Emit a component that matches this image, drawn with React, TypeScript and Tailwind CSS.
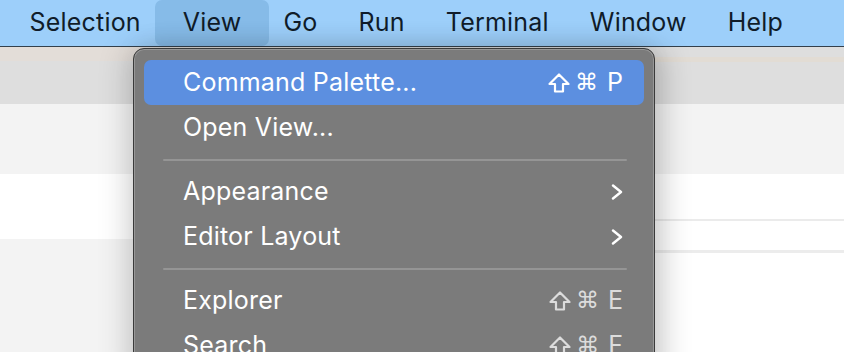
import React from "react";

const Chevron = () => (
  <svg width="12" height="16" viewBox="0 0 12 16" className="block">
    <polyline points="2,1.5 10,8 2,14.5" fill="none" stroke="white" strokeWidth="2.4" strokeLinecap="round" strokeLinejoin="round" />
  </svg>
);

const ShiftIcon = ({ color }: { color: string }) => (
  <svg width="22" height="20" viewBox="0 0 22 20" className="block">
    <path d="M11 1.5 L20.5 11 H15 V18.5 H7 V11 H1.5 Z" fill="none" stroke={color} strokeWidth="2.2" strokeLinejoin="round" />
  </svg>
);

const Shortcut = ({ k, dim }: { k: string; dim?: boolean }) => (
  <div className={`flex items-center ${dim ? "text-[#dcdcdc]" : "text-white"}`}>
    <ShiftIcon color={dim ? "#dcdcdc" : "#ffffff"} />
    <span className="ml-[5px] text-[23px] leading-none" style={{ fontFamily: '"DejaVu Sans", sans-serif' }}>⌘</span>
    <span className="ml-[9px] text-[25px] leading-none">{k}</span>
  </div>
);

const Row = ({ label, right, active }: { label: string; right?: React.ReactNode; active?: boolean }) => (
  <div className={`h-[45px] flex items-center justify-between pl-[39px] pr-[21px] rounded-[7px] ${active ? "bg-[#5c8fe0]" : ""}`}>
    <span className="text-[25px] tracking-[0.2px] text-white leading-none -mt-[1px]">{label}</span>
    {right}
  </div>
);

const Sep = () => (
  <div className="h-[19px] flex items-center pl-[19px] pr-[17px]">
    <div className="h-[2px] w-full bg-[#959595] rounded-full" />
  </div>
);

export default function App() {
  const items = ["Selection", "View", "Go", "Run", "Terminal", "Window", "Help"];
  return (
    <div className="w-[844px] h-[352px] relative overflow-hidden bg-white" style={{ fontFamily: 'Inter, "Liberation Sans", sans-serif' }}>
      <div className="h-[47px] bg-[#9dcffa] flex items-center pl-[9px] border-b border-[#33404c]">
        {items.map((it) =>
          it === "View" ? (
            <div key={it} className="h-[46px] -mx-[6px] px-[27.5px] flex items-center rounded-[7px] bg-[#86bbe8] text-[25px] tracking-[0.2px] text-[#101c29]">
              {it}
            </div>
          ) : (
            <div key={it} className="h-[46px] px-[20.5px] flex items-center text-[25px] tracking-[0.2px] text-[#101c29]">
              {it}
            </div>
          )
        )}
      </div>
      <div className="flex h-[305px]">
        <div className="w-[400px] flex flex-col">
          <div className="h-[57px] bg-[#dedede] flex flex-col">
            <div className="h-[14px] bg-[#e3ddd8]" />
          </div>
          <div className="h-[70px] bg-[#f3f3f3]" />
          <div className="h-[65px] bg-white" />
          <div className="flex-1 bg-[#f3f3f3]" />
        </div>
        <div className="flex-1 flex flex-col">
          <div className="h-[57px] bg-[#dedede] flex flex-col pl-[288px] pt-[10px]">
            <div className="h-[5px] w-[200px] bg-[#e2dcd4]" />
          </div>
          <div className="h-[70px] bg-[#f3f3f3]" />
          <div className="h-[45px] bg-white" />
          <div className="h-[2px] bg-[#ebebeb]" />
          <div className="h-[29px] bg-white" />
          <div className="h-[3px] bg-[#ececec]" />
          <div className="flex-1 bg-white" />
        </div>
      </div>
      <div className="absolute left-[133px] top-[48px] w-[522px] h-[330px] rounded-t-[11px] bg-[#7b7b7b] border border-[#3a3a3a] shadow-[inset_0_0_0_1px_rgba(255,255,255,0.22),10px_0_28px_rgba(0,0,0,0.18),-10px_0_28px_rgba(0,0,0,0.12)] pt-[11px] px-[10px]">
        <Row label="Command Palette..." active right={<Shortcut k="P" />} />
        <Row label="Open View..." />
        <Sep />
        <Row label="Appearance" right={<Chevron />} />
        <Row label="Editor Layout" right={<Chevron />} />
        <Sep />
        <Row label="Explorer" right={<Shortcut k="E" dim />} />
        <Row label="Search" right={<Shortcut k="F" dim />} />
      </div>
    </div>
  );
}
